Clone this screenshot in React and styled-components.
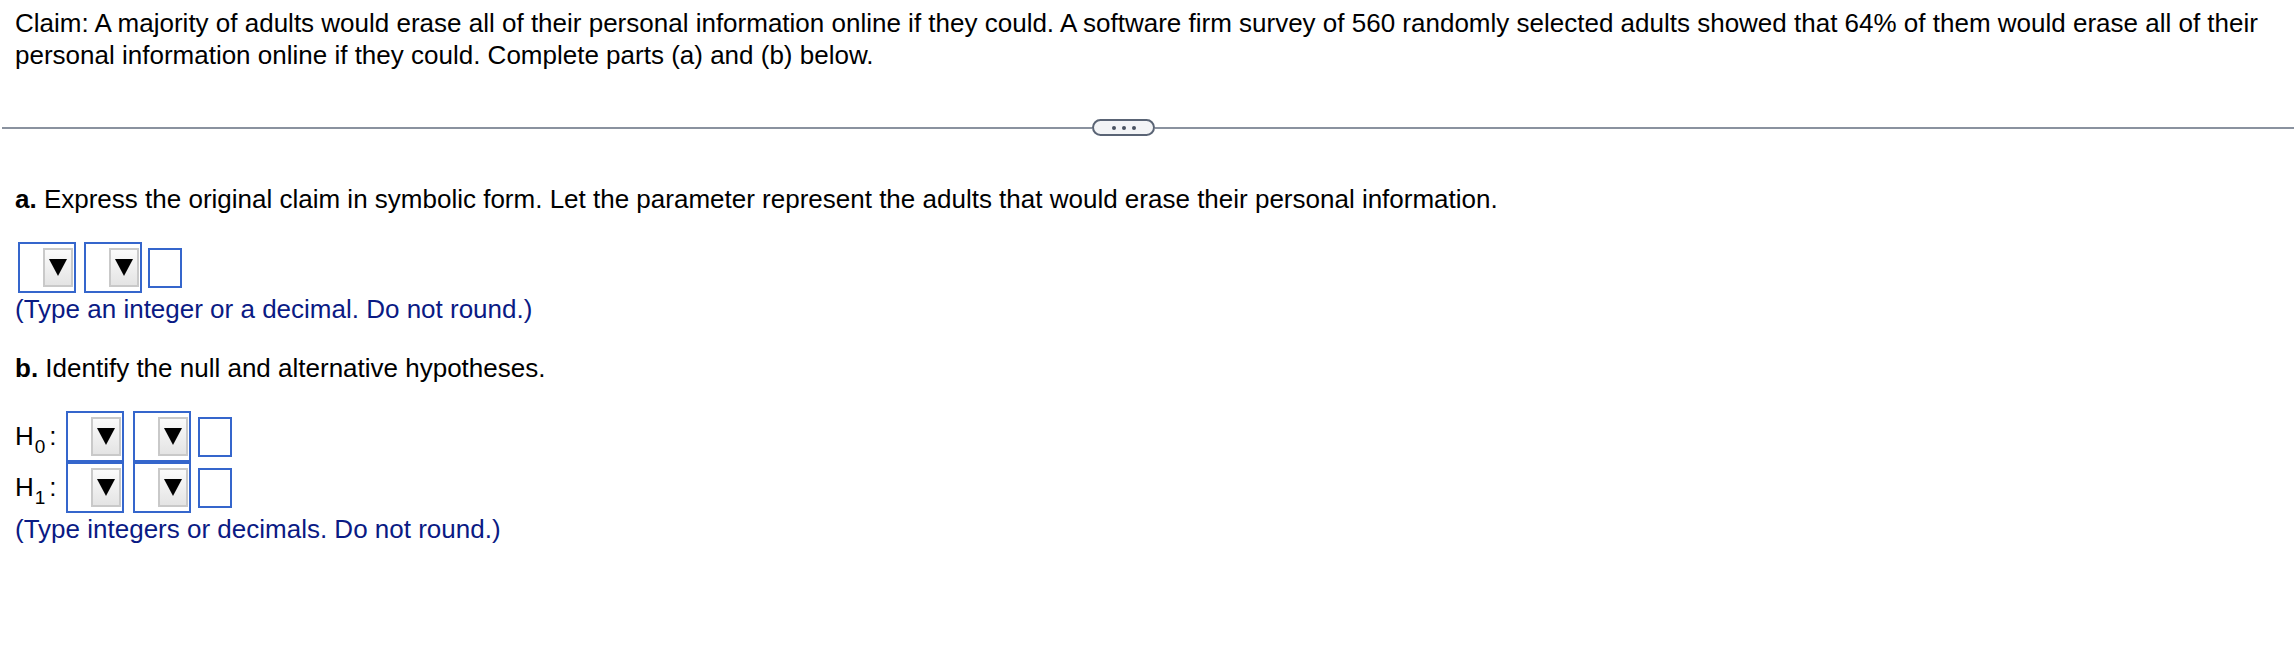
import React from "react";
import styled, { createGlobalStyle } from "styled-components";

const GlobalStyle = createGlobalStyle`
  body {
    margin: 0;
    background: #ffffff;
    font-family: "Liberation Sans", Arial, sans-serif;
    color: #000000;
  }
`;

const Page = styled.div`
  padding: 7px 14px 40px 15px;
`;

const Question = styled.p`
  margin: 0;
  font-size: 26px;
  line-height: 32px;
`;

const Divider = styled.div`
  display: flex;
  align-items: center;
  margin: 48px -14px 0 -13px;
  height: 17px;
`;

const Line = styled.div`
  height: 2px;
  background: #8a929f;
  flex: ${(p) => (p.$fixed ? `0 0 ${p.$fixed}px` : "1 1 auto")};
`;

const Pill = styled.div`
  box-sizing: border-box;
  width: 63px;
  height: 17px;
  border: 2px solid #5a6475;
  border-radius: 9px;
  background: #f3f4f6;
  display: flex;
  align-items: center;
  justify-content: center;
  gap: 6px;
`;

const Dot = styled.span`
  width: 4px;
  height: 4px;
  border-radius: 50%;
  background: #4a5261;
`;

const Heading = styled.p`
  margin: ${(p) => p.$top}px 0 0 0;
  font-size: 26px;
  line-height: 26px;
`;

const Hint = styled.p`
  margin: ${(p) => p.$top}px 0 0 0;
  font-size: 26px;
  line-height: 26px;
  color: #0a1a84;
`;

const AnswerRow = styled.div`
  display: flex;
  align-items: center;
  margin-top: ${(p) => p.$top || 0}px;
  padding-left: ${(p) => p.$indent || 0}px;
  height: ${(p) => p.$height || 51}px;
`;

const Rows = styled.div`
  margin-top: 30px;
  display: flex;
  flex-direction: column;
`;

const Select = styled.div`
  box-sizing: border-box;
  width: 58px;
  height: 51px;
  border: 2px solid #3566cc;
  display: flex;
  align-items: center;
  justify-content: flex-end;
  padding-right: 1px;
  margin-right: ${(p) => p.$gap}px;
`;

const SelectButton = styled.div`
  box-sizing: border-box;
  width: 30px;
  height: 39px;
  border: 2px solid #c9c9c9;
  background: linear-gradient(#fbfbfb, #e4e4e4);
  display: flex;
  align-items: center;
  justify-content: center;
`;

const Input = styled.div`
  box-sizing: border-box;
  width: 34px;
  height: 40px;
  border: 2px solid #3566cc;
  background: #ffffff;
`;

const Label = styled.div`
  width: 51px;
  font-size: 26px;
  display: flex;
  align-items: baseline;
`;

const Sub = styled.span`
  font-size: 19px;
  position: relative;
  top: 8px;
  margin-left: 1px;
`;

const Colon = styled.span`
  margin-left: 4px;
`;

const Triangle = () => (
  <svg width="18" height="17" viewBox="0 0 18 17">
    <polygon points="0,0 18,0 9,17" fill="#000" />
  </svg>
);

const Dropdown = ({ gap }) => (
  <Select $gap={gap}>
    <SelectButton>
      <Triangle />
    </SelectButton>
  </Select>
);

const Hypothesis = ({ sub }) => (
  <AnswerRow $height={51}>
    <Label>
      H<Sub>{sub}</Sub>
      <Colon>:</Colon>
    </Label>
    <Dropdown gap={9} />
    <Dropdown gap={7} />
    <Input />
  </AnswerRow>
);

export default function App() {
  return (
    <Page>
      <GlobalStyle />
      <Question>
        Claim: A majority of adults would erase all of their personal information online if they
        could. A software firm survey of 560 randomly selected adults showed that 64% of them
        would erase all of their personal information online if they could. Complete parts (a)
        and (b) below.
      </Question>

      <Divider>
        <Line $fixed={1090} />
        <Pill>
          <Dot />
          <Dot />
          <Dot />
        </Pill>
        <Line />
      </Divider>

      <Heading $top={50}>
        <b>a.</b> Express the original claim in symbolic form. Let the parameter represent the
        adults that would erase their personal information.
      </Heading>

      <AnswerRow $top={30} $indent={3}>
        <Dropdown gap={8} />
        <Dropdown gap={6} />
        <Input />
      </AnswerRow>
      <Hint $top={3}>(Type an integer or a decimal. Do not round.)</Hint>

      <Heading $top={33}>
        <b>b.</b> Identify the null and alternative hypotheses.
      </Heading>

      <Rows>
        <Hypothesis sub="0" />
        <Hypothesis sub="1" />
      </Rows>
      <Hint $top={3}>(Type integers or decimals. Do not round.)</Hint>
    </Page>
  );
}
